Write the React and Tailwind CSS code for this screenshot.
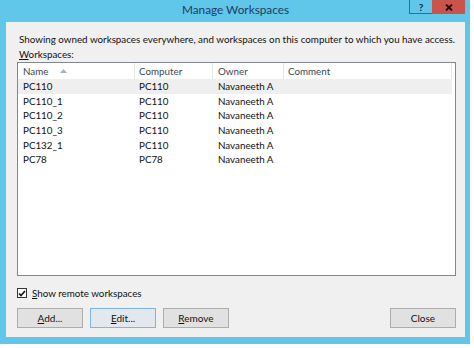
import React from 'react';

const rows = [
  { name: 'PC110', computer: 'PC110', owner: 'Navaneeth A' },
  { name: 'PC110_1', computer: 'PC110', owner: 'Navaneeth A' },
  { name: 'PC110_2', computer: 'PC110', owner: 'Navaneeth A' },
  { name: 'PC110_3', computer: 'PC110', owner: 'Navaneeth A' },
  { name: 'PC132_1', computer: 'PC110', owner: 'Navaneeth A' },
  { name: 'PC78', computer: 'PC78', owner: 'Navaneeth A' },
];

const cols = 'grid grid-cols-[117px_78px_71px_1fr]';

function Btn({ children, focused }) {
  return (
    <button
      className={
        focused
          ? 'w-[66px] h-[20px] border border-[#7eb4ea] bg-[#e3e8ee] text-[10px] leading-none text-[#111]'
          : 'w-[66px] h-[20px] border border-[#adadad] bg-[#e1e1e1] text-[10px] leading-none text-[#111]'
      }
    >
      {children}
    </button>
  );
}

export default function App() {
  return (
    <div className="w-[474px] h-[348px] bg-white overflow-hidden whitespace-nowrap" style={{ fontFamily: 'Lato, "Noto Sans", sans-serif' }}>
      <div className="w-[470px] h-[344px] bg-[#60c6ea] flex flex-col pl-[6px] pr-[5px] pb-[7px]">
        {/* title bar */}
        <div className="h-[22px] grid grid-cols-[1fr_auto_1fr] items-start -ml-[6px] -mr-[5px] pl-[6px] pr-[5px]">
          <div />
          <div className="text-[11.8px] leading-[20px] text-[#1d3d5c]">Manage Workspaces</div>
          <div className="flex justify-end">
            <div className="w-[23px] h-[14px] border-l border-b border-[#2f6f90] flex items-center justify-center text-[10px] font-bold text-[#1a2230] leading-none">?</div>
            <div className="w-[33px] h-[14px] bg-[#c9544b] flex items-center justify-center">
              <svg width="8" height="7" viewBox="0 0 8 7">
                <path d="M1 0.5 L7 6.5 M7 0.5 L1 6.5" stroke="#2a0d0a" strokeWidth="1.8" />
              </svg>
            </div>
          </div>
        </div>

        {/* body */}
        <div className="flex-1 bg-[#f0f0f0] pl-[11px] pr-[9px] pt-[10px] flex flex-col text-[9.8px] text-[#111]">
          <div className="px-[2px] h-[14px] leading-[14px]">
            Showing owned workspaces everywhere, and workspaces on this computer to which you have access.
          </div>
          <div className="px-[2px] h-[14px] leading-[14px] mt-[1px]">
            <span className="underline">W</span>orkspaces:
          </div>

          <div className="mt-[1px] h-[214px] bg-white border border-[#828790] flex flex-col">
            <div className={`${cols} h-[16px] mr-[3px] text-[#3d4756]`}>
              <div className="pl-[5px] flex items-center border-r border-[#e5e5e5]">
                Name
                <svg className="ml-[12px]" width="7" height="4" viewBox="0 0 7 4">
                  <path d="M0 4 L3.5 0 L7 4 Z" fill="#a8b3c2" />
                </svg>
              </div>
              <div className="pl-[4px] flex items-center border-r border-[#e5e5e5]">Computer</div>
              <div className="pl-[5px] flex items-center border-r border-[#e5e5e5]">Owner</div>
              <div className="pl-[4px] flex items-center border-r border-[#e5e5e5]">Comment</div>
            </div>
            {rows.map((r, i) => (
              <div
                key={r.name}
                className={`${cols} h-[14.7px] mr-[3px] items-center ${i === 0 ? 'bg-[#efefef]' : ''}`}
              >
                <div className="pl-[5px]">{r.name}</div>
                <div className="pl-[4px]">{r.computer}</div>
                <div className="pl-[5px]">{r.owner}</div>
                <div />
              </div>
            ))}
          </div>

          <div className="mt-[10px] h-[14px] flex items-center gap-[5px]">
            <div className="w-[10px] h-[10px] border border-[#333] bg-white flex items-center justify-center">
              <svg width="8" height="7" viewBox="0 0 8 7">
                <path d="M1 3.5 L3 5.5 L7 1" stroke="#111" strokeWidth="1.6" fill="none" />
              </svg>
            </div>
            <span>
              <span className="underline">S</span>how remote workspaces
            </span>
          </div>

          <div className="mt-[8px] flex items-center gap-[7px]">
            <Btn>
              <span className="underline">A</span>dd...
            </Btn>
            <Btn focused>
              <span className="underline">E</span>dit...
            </Btn>
            <Btn>
              <span className="underline">R</span>emove
            </Btn>
            <div className="flex-1" />
            <Btn>Close</Btn>
          </div>
        </div>
      </div>
    </div>
  );
}
